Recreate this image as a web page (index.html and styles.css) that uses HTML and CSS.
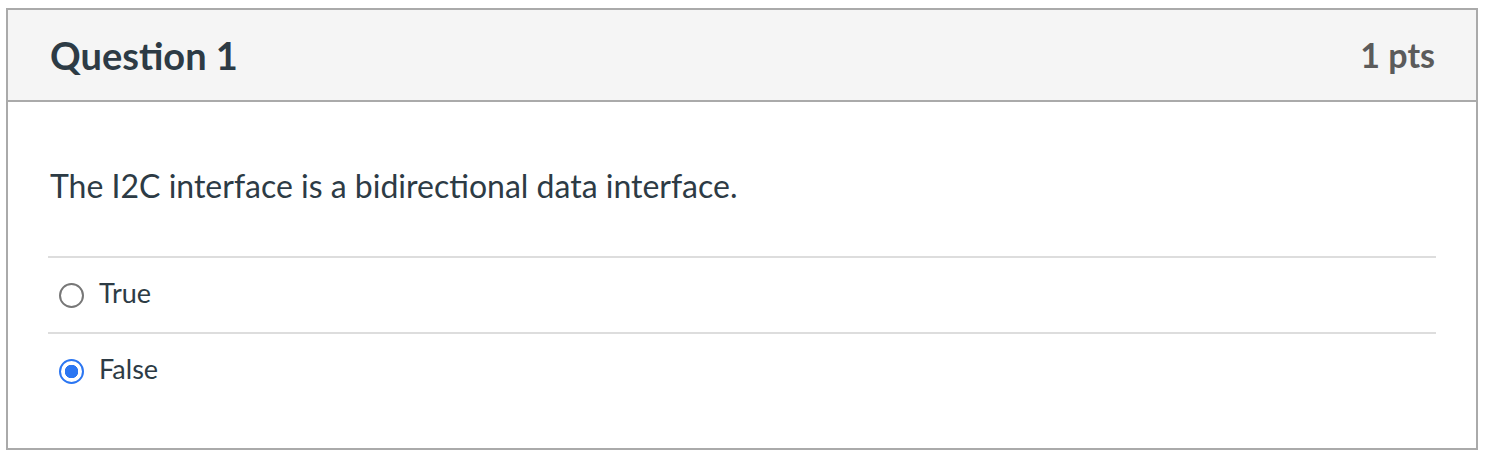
FILE: index.html
```html
<!DOCTYPE html>
<html lang="en">
<head>
<meta charset="utf-8">
<title>Question 1</title>
<link rel="stylesheet" href="styles.css">
</head>
<body>
<div class="question">
  <div class="header">
    <h2 class="title">Question 1</h2>
    <span class="points">1 pts</span>
  </div>
  <div class="content">
    <p class="text">The I2C interface is a bidirectional data interface.</p>
    <div class="answers">
      <label class="answer">
        <span class="radio"></span>
        <span class="label">True</span>
      </label>
      <label class="answer">
        <span class="radio checked"></span>
        <span class="label">False</span>
      </label>
    </div>
  </div>
</div>
</body>
</html>
```

FILE: styles.css
```css
html, body {
  margin: 0;
  padding: 0;
  background: #ffffff;
}
body {
  padding: 8px 12px 0 6px;
  font-family: Lato, "Open Sans", sans-serif;
  color: #2d3b45;
}
.question {
  border: 2px solid #aaaaaa;
}
.header {
  height: 90px;
  background: #f5f5f5;
  border-bottom: 2px solid #aaaaaa;
  display: flex;
  align-items: center;
  justify-content: space-between;
  padding: 0 41px 0 42px;
}
.title {
  margin: 0;
  font-size: 38px;
  font-weight: 700;
  color: #2d3b45;
  line-height: 40px;
}
.points {
  font-size: 34px;
  font-weight: 700;
  color: #5b5b5b;
  line-height: 40px;
}
.content {
  padding: 65px 40px 40px 40px;
}
.text {
  margin: 0 0 51px 0;
  padding-left: 2px;
  font-size: 32px;
  line-height: 38px;
}
.answer {
  display: flex;
  align-items: center;
  height: 74px;
  border-top: 2px solid #dddddd;
}
.radio {
  box-sizing: border-box;
  width: 25px;
  height: 25px;
  margin-left: 11px;
  margin-right: 15px;
  border: 2px solid #777777;
  border-radius: 50%;
  background: #ffffff;
}
.radio.checked {
  border-color: #2b76f2;
  background: radial-gradient(circle, #2b76f2 0 6.5px, #ffffff 7px);
}
.label {
  font-size: 27px;
  line-height: 32px;
  margin-bottom: 4px;
  color: #2d3b45;
}
```
